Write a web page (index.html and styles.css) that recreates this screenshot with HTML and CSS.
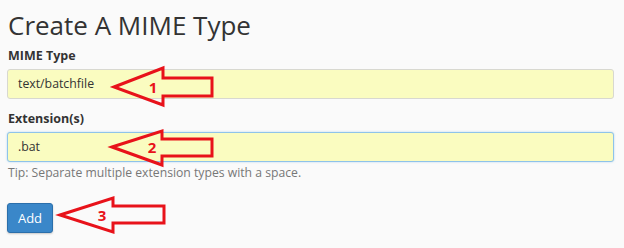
FILE: index.html
```html
<!DOCTYPE html>
<html>
<head>
<meta charset="utf-8">
<link rel="stylesheet" href="styles.css">
</head>
<body>
<div class="page">
  <h1 class="title">Create A MIME Type</h1>
  <div class="field">
    <label class="label">MIME Type</label>
    <div class="input">text/batchfile</div>
  </div>
  <div class="field">
    <label class="label">Extension(s)</label>
    <div class="input focus">.bat</div>
    <div class="tip">Tip: Separate multiple extension types with a space.</div>
  </div>
  <button class="btn">Add</button>
</div>
<svg class="overlay" width="624" height="248" viewBox="0 0 624 248">
  <g fill="none" stroke="#e8121a" stroke-width="3" stroke-linejoin="miter">
    <polygon points="114,87 163,68 163,78 212,78 212,96 163,96 163,105"/>
    <polygon points="112,147 162,131 162,139 212,139 212,156 162,156 162,165"/>
    <polygon points="60,215 113,198 113,206 164,206 164,223 113,223 113,232"/>
  </g>
  <g fill="#e8121a" font-family="'Open Sans', sans-serif" font-weight="700" font-size="15" text-anchor="middle">
    <text x="153" y="93">1</text>
    <text x="152" y="153">2</text>
    <text x="102" y="221">3</text>
  </g>
</svg>
</body>
</html>
```
FILE: styles.css
```css
html, body {
  margin: 0;
  padding: 0;
  background: #fafafa;
}
body {
  width: 624px;
  height: 248px;
  position: relative;
  overflow: hidden;
  font-family: "Open Sans", "DejaVu Sans", sans-serif;
  color: #333;
}
.page {
  padding: 10px 10px 0 7px;
  display: flex;
  flex-direction: column;
  align-items: flex-start;
}
.title {
  margin: 0 0 1px 1px;
  font-size: 26px;
  font-weight: 400;
  line-height: 31px;
  color: #333;
}
.field {
  align-self: stretch;
  display: flex;
  flex-direction: column;
}
.label {
  font-size: 12.5px;
  font-weight: 700;
  line-height: 17px;
  margin: 5px 0 5px 1px;
  color: #333;
}
.input {
  box-sizing: border-box;
  height: 30px;
  width: 607px;
  border: 1px solid #d8d8d0;
  border-radius: 3px;
  background: #fafcc0;
  font-size: 12.3px;
  line-height: 28px;
  padding: 0 10px;
  color: #333;
  margin-bottom: 6px;
}
.input.focus {
  border-color: #8ec3ea;
  box-shadow: 0 0 2px rgba(102, 175, 233, 0.5);
  margin-bottom: 2px;
}
.tip {
  font-size: 12.2px;
  line-height: 18px;
  color: #777;
  margin-left: 1px;
}
.btn {
  margin-top: 21px;
  box-sizing: border-box;
  width: 46px;
  height: 30px;
  border: 1px solid #2b6fab;
  border-radius: 3px;
  background: #3a87c9;
  color: #fff;
  font-family: "Open Sans", sans-serif;
  font-size: 13px;
  padding: 0;
  box-shadow: 0 1px 2px rgba(0,0,0,0.2);
}
.overlay {
  position: absolute;
  left: 0;
  top: 0;
  pointer-events: none;
}
```
